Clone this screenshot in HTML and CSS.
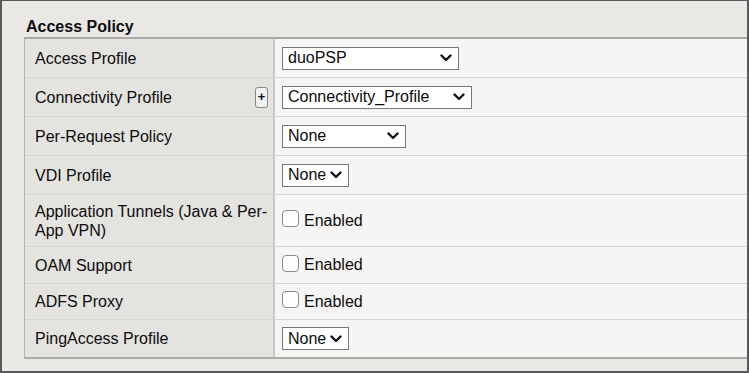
FILE: index.html
```html
<!DOCTYPE html>
<html lang="en">
<head>
  <meta charset="UTF-8">
  <title>Access Policy</title>
  <link rel="stylesheet" href="styles.css">
</head>
<body>
  <div class="frame">
    <div class="section-title">Access Policy</div>
    <div class="policy-table">
      <div class="row r1">
        <div class="label">Access Profile</div>
        <div class="value">
          <div class="select w-duo"><span>duoPSP</span><svg class="chev" viewBox="0 0 12 8"><path d="M1.5 1.5 L6 6 L10.5 1.5" /></svg></div>
        </div>
      </div>
      <div class="row r2">
        <div class="label">Connectivity Profile <span class="plus">+</span></div>
        <div class="value">
          <div class="select w-conn"><span>Connectivity_Profile</span><svg class="chev" viewBox="0 0 12 8"><path d="M1.5 1.5 L6 6 L10.5 1.5" /></svg></div>
        </div>
      </div>
      <div class="row r3">
        <div class="label">Per-Request Policy</div>
        <div class="value">
          <div class="select w-none"><span>None</span><svg class="chev" viewBox="0 0 12 8"><path d="M1.5 1.5 L6 6 L10.5 1.5" /></svg></div>
        </div>
      </div>
      <div class="row r4">
        <div class="label">VDI Profile</div>
        <div class="value">
          <div class="select w-short"><span>None</span><svg class="chev" viewBox="0 0 12 8"><path d="M1.5 1.5 L6 6 L10.5 1.5" /></svg></div>
        </div>
      </div>
      <div class="row r5">
        <div class="label">Application Tunnels (Java &amp; Per-<br>App VPN)</div>
        <div class="value"><span class="check"></span>Enabled</div>
      </div>
      <div class="row r6">
        <div class="label">OAM Support</div>
        <div class="value"><span class="check"></span>Enabled</div>
      </div>
      <div class="row r7">
        <div class="label">ADFS Proxy</div>
        <div class="value"><span class="check"></span>Enabled</div>
      </div>
      <div class="row r8">
        <div class="label">PingAccess Profile</div>
        <div class="value">
          <div class="select w-short"><span>None</span><svg class="chev" viewBox="0 0 12 8"><path d="M1.5 1.5 L6 6 L10.5 1.5" /></svg></div>
        </div>
      </div>
    </div>
  </div>
</body>
</html>
```

FILE: styles.css
```css
html, body {
  margin: 0;
  padding: 0;
}

body {
  font-family: "Liberation Sans", Arial, sans-serif;
  font-size: 16px;
  color: #0c0c0c;
  background-color: #e9e8e5;
}

.frame {
  box-sizing: border-box;
  width: 749px;
  height: 373px;
  border: 2px solid #5a5a5a;
  border-top-width: 1px;
  background-color: #e9e8e5;
  padding-left: 22px;
}

.section-title {
  font-weight: bold;
  font-size: 16px;
  line-height: 18px;
  padding: 17px 0 0 2px;
  height: 19px;
}

.policy-table {
  border-top: 2px solid #a9a8a5;
  border-left: 1px solid #b4b3b0;
  border-bottom: 2px solid #acaba8;
}

.row {
  display: grid;
  grid-template-columns: 250px 1fr;
  border-top: 1px solid #d6d5d2;
}

.row.r1 {
  border-top: none;
}

.r1 { height: 38px; }
.r2 { height: 38px; }
.r3 { height: 38px; }
.r4 { height: 38px; }
.r5 { height: 51px; }
.r6 { height: 36px; }
.r7 { height: 35px; }
.r8 { height: 37px; }

.label {
  background-color: #e4e3e0;
  border-right: 2px solid #c9c8c5;
  padding-left: 10px;
  display: flex;
  align-items: center;
  line-height: 19px;
  position: relative;
}

.value {
  background-color: #f6f5f3;
  display: flex;
  align-items: center;
  padding-left: 7px;
}

.select {
  box-sizing: border-box;
  height: 23px;
  background-color: #fff;
  border: 1px solid #777;
  display: flex;
  align-items: center;
  justify-content: space-between;
  padding: 0 6px 0 5px;
}

.w-duo { width: 177px; }
.w-conn { width: 190px; }
.w-none { width: 124px; }
.w-short { width: 67px; }

.chev {
  width: 12px;
  height: 8px;
  fill: none;
  stroke: #111;
  stroke-width: 2.4;
  stroke-linecap: round;
  stroke-linejoin: round;
}

.plus {
  position: absolute;
  right: 5px;
  top: 9px;
  box-sizing: border-box;
  width: 13px;
  height: 21px;
  border: 1px solid #888;
  border-radius: 3px;
  background-color: #f3f3f2;
  font-weight: bold;
  font-size: 13px;
  line-height: 18px;
  text-align: center;
}

.check {
  box-sizing: border-box;
  width: 17px;
  height: 17px;
  border: 1px solid #8a8a8a;
  border-radius: 4px;
  background-color: #fff;
  margin-right: 5px;
  margin-top: -4px;
}
```
